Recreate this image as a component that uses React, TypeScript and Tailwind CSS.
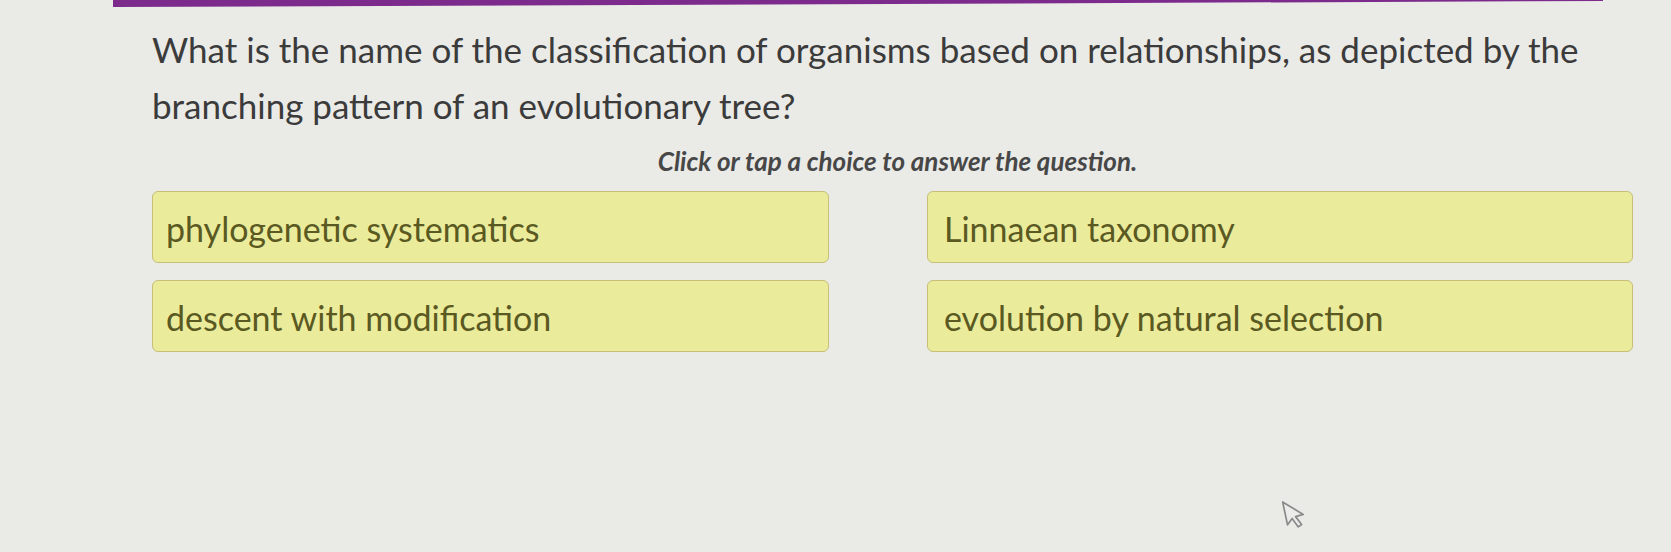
import React from "react";

const choices = [
  "phylogenetic systematics",
  "Linnaean taxonomy",
  "descent with modification",
  "evolution by natural selection",
];

export default function App() {
  return (
    <div className="relative w-full h-[552px] overflow-hidden bg-[#eaeae7] font-['Lato',sans-serif]">
      <div className="ml-[113px] w-[1490px] h-[7px] bg-[#7c2b8d] [clip-path:polygon(0_0,100%_0,100%_15%,0_100%)]" />
      <div className="pl-[152px] pr-[38px]">
        <h1 className="mt-[14px] text-[35px] leading-[56px] font-normal text-[#3b3b3b]">
          What is the name of the classification of organisms based on relationships, as depicted by the branching pattern of an evolutionary tree?
        </h1>
        <p className="mt-[12px] pl-[10px] text-center text-[26px] leading-[32px] font-bold italic text-[#474747]">
          Click or tap a choice to answer the question.
        </p>
        <div className="mt-[14px] grid grid-cols-[677px_706px] gap-x-[98px] gap-y-[17px]">
          {choices.map((c, i) => (
            <div
              key={c}
              className={
                i % 2 === 0
                  ? "h-[72px] flex items-center pl-[13px] rounded-[6px] border-[1.5px] border-[#c7bf78] bg-[#ebeb9c] text-[34px] text-[#5a5922]"
                  : "h-[72px] flex items-center pl-[16px] rounded-[6px] border-[1.5px] border-[#c7bf78] bg-[#ebeb9c] text-[34px] text-[#5a5922]"
              }
            >
              <span className="leading-none pt-[4px]">{c}</span>
            </div>
          ))}
        </div>
      </div>
      <svg
        className="absolute left-[1282px] top-[498px]"
        width="28"
        height="34"
        viewBox="0 0 26 32"
      >
        <path
          d="M3 2 L3 24 L8.5 19 L12.5 28 L16 26.5 L12 18 L19.5 17.5 Z"
          fill="#ececea"
          stroke="#8a8a8a"
          strokeWidth="1.6"
          strokeLinejoin="round"
          transform="rotate(-12 10 15)"
        />
      </svg>
    </div>
  );
}
